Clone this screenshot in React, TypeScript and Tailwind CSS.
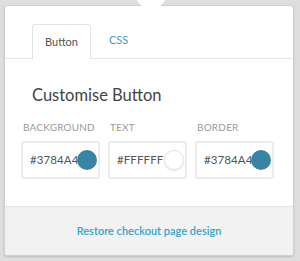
import React from "react";

const font = { fontFamily: "Lato, 'Open Sans', sans-serif" };

function ColorField({ value, color, light }: { value: string; color: string; light?: boolean }) {
  return (
    <div className="h-[38px] w-[79px] rounded-[3px] border-2 border-[#ececec] bg-white flex items-center pl-[7px] pr-[1px] justify-between">
      <span className="text-[11.5px] text-[#555] tracking-[0.1px]">{value}</span>
      <span
        className={
          "shrink-0 w-[20px] h-[20px] rounded-full -ml-[6px] " +
          (light ? "border border-[#e4e4e4] shadow-[0_1px_2px_rgba(0,0,0,0.12)]" : "")
        }
        style={{ backgroundColor: color }}
      />
    </div>
  );
}

export default function App() {
  return (
    <div className="w-[300px] h-[261px] bg-[#dedede] pt-[5px] pl-[4px] overflow-hidden" style={font}>
      <div className="relative w-[290px] h-[251px] bg-white border border-[#cfcfcf] rounded-[3px] shadow-[0_1px_2px_rgba(0,0,0,0.15)] flex flex-col">
        <div className="absolute left-[136px] -top-[15px] w-[20px] h-[20px] bg-white rotate-45" />
        <div className="relative h-[53px] border-b border-[#e6e6e6] flex items-end pl-[27px]">
          <div className="w-[59px] h-[35px] -mb-px border border-b-0 border-[#e3e3e3] rounded-t-[3px] bg-white flex items-center justify-center text-[11px] text-[#555]">
            Button
          </div>
          <div className="h-[35px] pl-[18px] flex items-center text-[11px] text-[#36a3c9]">CSS</div>
        </div>
        <div className="px-[16px]">
          <div className="pl-[11px] pt-[28px] text-[16.5px] text-[#444] leading-none">Customise Button</div>
          <div className="mt-[18px] flex gap-x-[8px]">
            <div className="flex flex-col w-[79px]">
              <span className="text-[10px] text-[#9a9a9a] tracking-[0.2px] leading-none mb-[9px] pl-[2px]">BACKGROUND</span>
              <ColorField value="#3784A4" color="#3784A4" />
            </div>
            <div className="flex flex-col w-[79px]">
              <span className="text-[10px] text-[#9a9a9a] tracking-[0.2px] leading-none mb-[9px] pl-[2px]">TEXT</span>
              <ColorField value="#FFFFFF" color="#ffffff" light />
            </div>
            <div className="flex flex-col w-[79px]">
              <span className="text-[10px] text-[#9a9a9a] tracking-[0.2px] leading-none mb-[9px] pl-[2px]">BORDER</span>
              <ColorField value="#3784A4" color="#3784A4" />
            </div>
          </div>
        </div>
        <div className="mt-auto h-[49px] bg-[#f2f2f2] border-t border-[#e3e3e3] rounded-b-[3px] flex items-center justify-center text-[11px] font-semibold text-[#36a3c9]">
          Restore checkout page design
        </div>
      </div>
    </div>
  );
}
